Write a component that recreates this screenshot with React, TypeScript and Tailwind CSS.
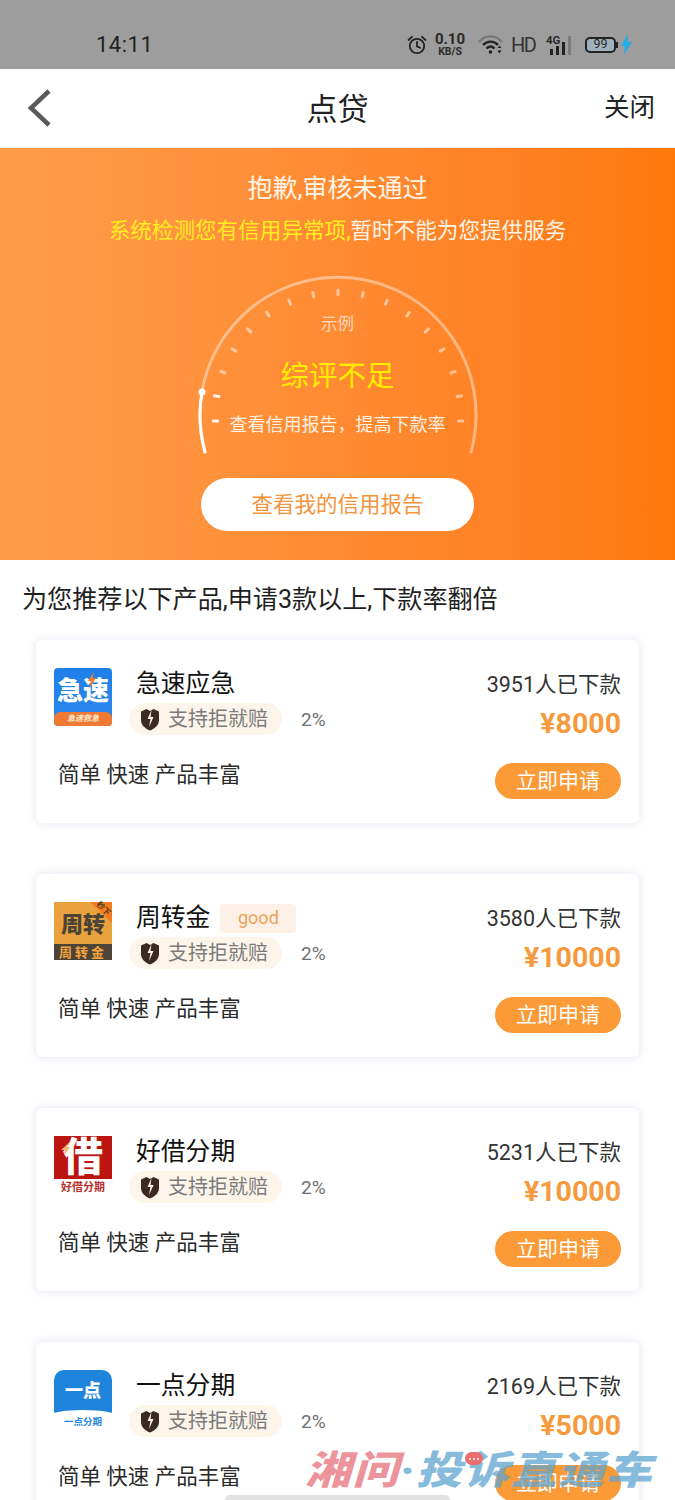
const FONT = "font-['Roboto','Noto_Sans_CJK_SC',sans-serif]";

function StatusIcons() {
  return (
    <div className="flex items-center text-[#2a2a2a]">
      <svg width="20" height="20" viewBox="0 0 20 20" fill="none" stroke="#222" strokeWidth="1.8">
        <circle cx="10" cy="11" r="7.2" />
        <path d="M10 7v4.400l3 1.400M1.500 5 5 1.800M18.500 5 15 1.800" strokeLinecap="round" />
      </svg>
      <div className="ml-[7px] flex w-[32px] flex-col items-center font-bold leading-none">
        <span className="text-[15px] leading-[14px]">0.10</span>
        <span className="text-[10.500px] leading-[11px]">KB/S</span>
      </div>
      <svg width="26" height="20" viewBox="0 0 26 20" fill="none" className="ml-[12px]">
        <path d="M1 7C7-.5 18-.5 24 7" stroke="#777" strokeWidth="2.2" />
        <path d="M5 10c4.500-4.500 11-4.500 15 0" stroke="#222" strokeWidth="2.4" />
        <path d="M8.500 13.500c2.500-2.500 5.500-2.500 8 0" stroke="#222" strokeWidth="2.4" />
        <circle cx="12.500" cy="17" r="1.800" fill="#222" />
        <path d="M21.500 10.500 23.500 13h-4zM21.500 18.500 23.500 15.500h-4z" fill="#222" />
      </svg>
      <span className="ml-[7px] w-[24px] text-[20px] leading-none tracking-[-1.500px] text-[#333333]">HD</span>
      <div className="relative ml-[11px] h-[22px] w-[26px]">
        <span className="absolute left-0 top-0 text-[11.500px] font-bold leading-[12px]">4G</span>
        <svg width="26" height="22" viewBox="0 0 26 22" className="absolute left-0 top-0">
          <rect x="4" y="15" width="3" height="6" fill="#222" />
          <rect x="10" y="12" width="3" height="9" fill="#222" />
          <rect x="16" y="8" width="3" height="13" fill="#222" />
          <rect x="22" y="2" width="3" height="19" fill="#7d7d7d" />
        </svg>
      </div>
      <div className="relative ml-[13px] flex h-[16px] w-[31px] items-center justify-center rounded-[5px] border-2 border-[#222] bg-[#9fb2bc] text-[12.500px] leading-none">
        99
        <span className="absolute right-[-4px] top-[3px] h-[6px] w-[2px] bg-[#222]" />
      </div>
      <svg width="13" height="21" viewBox="0 0 13 21" className="ml-[4px]">
        <path d="M8 0 1 12h4L3.500 21 12 8H7.500z" fill="#1fb0ea" />
      </svg>
    </div>
  );
}

function Gauge() {
  const cx = 142;
  const cy = 140;
  const ticks = Array.from({ length: 17 }, (_, i) => -92.8 + i * 11.6);
  return (
    <svg width="284" height="182" viewBox="0 0 284 182" fill="none" className="absolute left-0 top-0">
      <path d="M9 177A138 138 0 1 1 275 177" stroke="#ffffff" strokeOpacity="0.42" strokeWidth="3" strokeLinecap="round" />
      <path d="M9 177A138 138 0 0 1 6 117" stroke="#ffffff" strokeWidth="3" strokeLinecap="round" />
      <circle cx="6" cy="117" r="3.500" fill="#ffffff" />
      {ticks.map((a, i) => {
        const r = (a * Math.PI) / 180;
        const s = Math.sin(r);
        const c = Math.cos(r);
        return (
          <line
            key={i}
            x1={cx + s * 120.5}
            y1={cy - c * 120.5}
            x2={cx + s * 125}
            y2={cy - c * 125}
            stroke="#ffffff"
            strokeOpacity={i < 2 ? 0.9 : 0.5}
            strokeWidth="3"
            strokeLinecap="round"
          />
        );
      })}
    </svg>
  );
}

function Shield() {
  return (
    <svg width="20" height="23" viewBox="0 0 20 23">
      <path d="M1 3.500 6.500 1 10 3l3.500-2L19 3.500V12c0 5-4 8.500-9 10.500C5 20.500 1 17 1 12z" fill="#3d2a1e" />
      <path d="M11.500 2 7.500 11h3l-1.500 8 4.500-10h-3z" fill="#fdf5ea" />
    </svg>
  );
}

function LogoJisu() {
  return (
    <div className="relative flex h-[58px] w-[58px] flex-col items-center rounded-[4px] bg-gradient-to-b from-[#1f7fe8] to-[#2a8af0]">
      <div className="mt-[7px] flex text-[26px] font-black leading-[32px] text-white">急速</div>
      <svg width="10" height="17" viewBox="0 0 10 17" className="absolute left-[33px] top-[4px]">
        <path d="M7 0 1 9h3l-2 8 7-11H5.500z" fill="#ff7a2a" />
      </svg>
      <div className="absolute bottom-0 left-0 flex h-[14px] w-full items-center justify-center rounded-b-[4px] rounded-t-[6px] bg-[#ee7a35] text-[8px] font-bold italic leading-none text-[#ffe9c9]">急速救急</div>
    </div>
  );
}

function LogoZhou() {
  return (
    <div className="relative flex h-[58px] w-[58px] flex-col items-center bg-[#e9a23e]">
      <div className="mt-[10px] h-[31px] text-[22px] font-black leading-[26px] text-[#4c4436]">周转</div>
      <div className="mt-[1px] flex h-[16px] w-full items-center justify-center bg-[#4c4436] text-[13px] font-bold leading-none tracking-[3px] text-[#f0a33f]">周转金</div>
      <svg width="22" height="21" viewBox="0 0 22 21" className="absolute right-0 top-0">
        <path d="M0 0h22v21z" fill="#f57c1e" />
      </svg>
      <span className="absolute right-[1px] top-[3px] rotate-45 text-[8px] font-bold leading-none text-[#4c3a20]">秒下</span>
    </div>
  );
}

function LogoJie() {
  return (
    <div className="flex h-[58px] w-[58px] flex-col items-center">
      <div className="relative flex h-[43px] w-[58px] items-center justify-center bg-[#bb1512] text-[40px] font-black leading-[43px] text-white">
        借
        <svg width="13" height="16" viewBox="0 0 13 16" className="absolute left-[6px] top-[4px]">
          <path d="M12 0 1 10h4l-1 6 6-9H7z" fill="#f9b878" />
        </svg>
      </div>
      <div className="mt-[2px] whitespace-nowrap text-[11px] font-bold leading-[13px] text-[#b8302c]">好借分期</div>
    </div>
  );
}

function LogoYidian() {
  return (
    <div className="flex h-[58px] w-[58px] flex-col items-center">
      <div className="relative flex h-[45px] w-[58px] justify-center overflow-hidden rounded-t-[10px] bg-[#1f84dc]">
        <span className="mt-[10px] text-[18px] font-black leading-[22px] text-white">一点</span>
        <span className="absolute bottom-[-8px] left-[-6px] h-[13px] w-[70px] rounded-[50%] bg-white" />
      </div>
      <div className="mt-[1px] whitespace-nowrap text-[9.500px] font-bold leading-[12px] text-[#1f84dc]">一点分期</div>
    </div>
  );
}

function Card({ logo, name, tag, count, price }: { logo: React.ReactNode; name: string; tag?: string; count: string; price: string }) {
  return (
    <div className="flex h-[183px] w-[603px] shrink-0 flex-col rounded-[6px] bg-white pl-[18px] pr-[18px] pt-[27px] shadow-[0_0_8px_rgba(190,190,225,0.45)]">
      <div className="flex h-[97px] justify-between">
        <div className="flex">
          <div className="mt-[1px] h-[58px] w-[58px] shrink-0">{logo}</div>
          <div className="ml-[24px] flex flex-col">
            <div className="flex h-[34px] items-center">
              <span className="text-[24.800px] leading-[30px] text-[#111111]">{name}</span>
              {tag && (
                <span className="ml-[10px] flex h-[29px] w-[76px] items-center justify-center rounded-[4px] bg-[#fdf0e7] text-[18px] leading-none text-[#efa255]">{tag}</span>
              )}
            </div>
            <div className="ml-[-7px] mt-[2px] flex items-center">
              <div className="flex h-[32px] w-[153px] items-center rounded-full bg-[#fdf5ea] pl-[11px]">
                <Shield />
                <span className="ml-[8px] text-[20px] leading-none text-[#7b7b7b]">支持拒就赔</span>
              </div>
              <span className="ml-[19px] text-[19px] leading-none text-[#6f6f6f]">2%</span>
            </div>
          </div>
        </div>
        <div className="flex flex-col items-end pt-[2px]">
          <span className="text-[21.500px] leading-[32px] text-[#333333]">{count}</span>
          <span className="mt-[7px] text-[28.500px] font-bold leading-[32px] text-[#f59a3d]">¥{price}</span>
        </div>
      </div>
      <div className="flex items-start justify-between">
        <span className="ml-[4px] mt-[-4px] whitespace-pre text-[21.500px] leading-[30px] text-[#2b2b2b]">简单 快速 产品丰富</span>
        <button className="mt-[-1px] flex h-[36px] w-[126px] items-center justify-center rounded-full bg-[#fb9a36] text-[21px] leading-none text-white">立即申请</button>
      </div>
    </div>
  );
}

export default function App() {
  return (
    <div className={`relative h-[1500px] w-[675px] overflow-hidden bg-white ${FONT}`}>
      <div className="flex h-[69px] items-center justify-between bg-[#9d9d9d] pl-[96px] pr-[42px] pt-[20px]">
        <span className="text-[22px] leading-none tracking-[0.5px] text-[#222222]">14:11</span>
        <StatusIcons />
      </div>
      <div className="grid h-[79px] grid-cols-3 items-center border-b border-[#eeeeee] bg-white pl-[27px] pr-[20px]">
        <svg width="26" height="40" viewBox="0 0 26 40" fill="none">
          <path d="M22 3 4 20l18 17" stroke="#5a5a5a" strokeWidth="4.500" />
        </svg>
        <span className="ml-[-7px] mt-[2px] text-center text-[31px] leading-none text-[#222222]">点贷</span>
        <span className="text-right text-[25.500px] leading-none text-[#222222]">关闭</span>
      </div>
      <div className="flex h-[412px] flex-col items-center bg-gradient-to-r from-[#ff9c4a] to-[#ff780a]">
        <div className="mt-[25px] text-[25px] leading-[32px] text-[#fff4e6]">抱歉,审核未通过</div>
        <div className="mt-[10px] whitespace-nowrap text-[21.600px] leading-[32px]">
          <span className="text-[#ffee22]">系统检测您有信用异常项,</span>
          <span className="text-[#fff4e6]">暂时不能为您提供服务</span>
        </div>
        <div className="relative mt-[28px] flex h-[182px] w-[284px] shrink-0 flex-col items-center">
          <Gauge />
          <span className="relative mt-[39px] text-[16.500px] leading-[22px] text-white/65">示例</span>
          <span className="relative mt-[21px] text-[28.500px] leading-[40px] text-[#ffee00]">综评不足</span>
          <span className="relative mt-[15px] whitespace-nowrap text-[18px] leading-[26px] text-[#fff1e2]">查看信用报告，提高下款率</span>
        </div>
        <button className="mt-[21px] flex h-[53px] w-[273px] items-center justify-center rounded-full bg-white text-[21.500px] leading-none text-[#f4943c]">查看我的信用报告</button>
      </div>
      <div className="ml-[22px] mt-[23px] whitespace-nowrap text-[25.100px] leading-[34px] text-[#1f1f1f]">为您推荐以下产品,申请3款以上,下款率翻倍</div>
      <div className="ml-[36px] mt-[23px] flex flex-col gap-[51px]">
        <Card logo={<LogoJisu />} name="急速应急" count="3951人已下款" price="8000" />
        <Card logo={<LogoZhou />} name="周转金" tag="good" count="3580人已下款" price="10000" />
        <Card logo={<LogoJie />} name="好借分期" count="5231人已下款" price="10000" />
        <Card logo={<LogoYidian />} name="一点分期" count="2169人已下款" price="5000" />
      </div>
      <div className="absolute left-[305px] top-[1444px] flex origin-center scale-y-[0.85] items-center whitespace-nowrap text-[46px] font-black italic leading-[52px] tracking-[1.500px]">
        <span className="text-[#e8707c]/75">湘问</span>
        <span className="text-[#5fa5cf]/75">·投诉直通车</span>
      </div>
      <span className="absolute left-[465px] top-[1452px] flex h-[13px] w-[18px] items-center justify-center gap-[2px] rounded-full bg-[#ea6e6e]">
        <i className="h-[2px] w-[2px] rounded-full bg-white" />
        <i className="h-[2px] w-[2px] rounded-full bg-white" />
        <i className="h-[2px] w-[2px] rounded-full bg-white" />
      </span>
      <div className="absolute bottom-0 left-[225px] h-[5px] w-[225px] rounded-t-full bg-[#e2e2e2]" />
    </div>
  );
}
